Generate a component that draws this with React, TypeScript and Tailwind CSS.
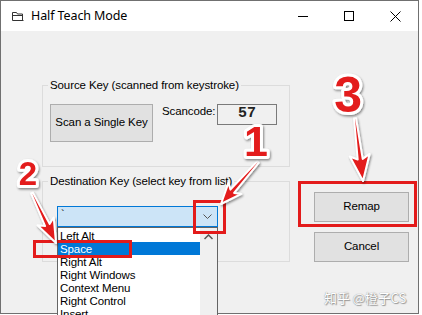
import React from 'react';

const RED = '#e31b1b';

function arrowPoints(x1: number, y1: number, x2: number, y2: number, headLen: number, headW: number, w0: number, w1: number, notch: number) {
  const len = Math.hypot(x2 - x1, y2 - y1);
  const dx = (x2 - x1) / len;
  const dy = (y2 - y1) / len;
  const nx = -dy;
  const ny = dx;
  const bx = x2 - dx * headLen;
  const by = y2 - dy * headLen;
  const wx = bx - dx * notch;
  const wy = by - dy * notch;
  const pts = [
    [x1 + (nx * w0) / 2, y1 + (ny * w0) / 2],
    [bx + (nx * w1) / 2, by + (ny * w1) / 2],
    [wx + (nx * headW) / 2, wy + (ny * headW) / 2],
    [x2, y2],
    [wx - (nx * headW) / 2, wy - (ny * headW) / 2],
    [bx - (nx * w1) / 2, by - (ny * w1) / 2],
    [x1 - (nx * w0) / 2, y1 - (ny * w0) / 2],
  ];
  return pts.map((p) => p.map((v) => v.toFixed(1)).join(',')).join(' ');
}

function Annotations() {
  return (
    <svg className="absolute inset-0 z-20 pointer-events-none" width="422" height="315" viewBox="0 0 422 315">
      <defs>
        <filter id="sh" x="-20%" y="-20%" width="140%" height="140%">
          <feDropShadow dx="1" dy="1.5" stdDeviation="1.2" floodColor="#000" floodOpacity="0.45" />
        </filter>
      </defs>
      {/* boxes */}
      <rect x="194.5" y="201.5" width="30" height="31" fill="none" stroke={RED} strokeWidth="3" />
      <rect x="34.5" y="241.5" width="96" height="15" fill="none" stroke={RED} strokeWidth="3" />
      <rect x="299.5" y="182.5" width="116" height="43" fill="none" stroke={RED} strokeWidth="3" />
      {/* arrows */}
      <g filter="url(#sh)" fill={RED} stroke="#fff" strokeWidth="2" strokeLinejoin="round">
        <polygon points={arrowPoints(258, 162, 221, 204, 17, 17, 2, 5, 4)} />
        <polygon points={arrowPoints(32, 193, 56, 243, 20, 18, 2, 5, 4)} />
        <polygon points={arrowPoints(355, 118, 363, 181, 22, 20, 2, 5, 4)} />
      </g>
      {/* numbers */}
      <g
        filter="url(#sh)"
        fill={RED}
        stroke="#fff"
        strokeWidth="6"
        strokeLinejoin="round"
        style={{ paintOrder: 'stroke', fontFamily: '"Liberation Sans", Arial, sans-serif', fontWeight: 900 }}
      >
        <text x="256" y="156" fontSize="43" textAnchor="middle">1</text>
        <text x="28" y="185" fontSize="33" textAnchor="middle">2</text>
        <text x="348" y="112" fontSize="50" textAnchor="middle">3</text>
      </g>
    </svg>
  );
}

function TitleBar() {
  return (
    <div className="h-[30px] bg-white flex items-center shrink-0">
      <svg className="ml-[10px]" width="13" height="12" viewBox="0 0 13 12" fill="none" stroke="#333" strokeWidth="1">
        <path d="M1.5 2.5h4l1 1.5h5v6.5h-10z" />
        <path d="M1.5 5.5h10" />
        <path d="M11 10.5h1.5" />
      </svg>
      <span className="ml-[7px] text-[12.5px] text-black font-['Noto_Sans',sans-serif]">Half Teach Mode</span>
      <div className="ml-auto flex items-center h-full">
        <div className="w-[46px] h-full flex items-center justify-center">
          <div className="w-[10px] h-px bg-black" />
        </div>
        <div className="w-[46px] h-full flex items-center justify-center">
          <div className="w-[10px] h-[10px] border border-black" />
        </div>
        <div className="w-[46px] h-full flex items-center justify-center">
          <svg width="11" height="11" viewBox="0 0 11 11" stroke="#000" strokeWidth="1">
            <path d="M0.5 0.5L10.5 10.5M10.5 0.5L0.5 10.5" />
          </svg>
        </div>
      </div>
    </div>
  );
}

const items = ['Left Alt', 'Space', 'Right Alt', 'Right Windows', 'Context Menu', 'Right Control', 'Insert', 'Home'];

export default function App() {
  return (
    <div className="w-[422px] h-[315px] bg-white relative overflow-hidden font-['Liberation_Sans',Arial,sans-serif] text-[11px] tracking-[-0.1px] text-black">
      <div className="w-[419px] h-[314px] border border-[#707070] flex flex-col">
        <TitleBar />
        <div className="flex-1 bg-[#f0f0f0] flex">
          <div className="ml-[41px] mt-[47px] w-[248px] flex flex-col gap-[7px]">
            <fieldset className="border border-[#dcdcdc] pb-[24px]">
              <legend className="ml-[5px] px-[2px] leading-[14px] text-[11.5px]">Source Key (scanned from keystroke)</legend>
              <div className="flex items-start mt-[12px] ml-[7px]">
                <button className="w-[103px] h-[38px] bg-[#e1e1e1] border border-[#adadad] text-[11.5px]">Scan a Single Key</button>
                <span className="ml-[9px] mt-[-1px] w-[55px] text-[11.5px]">Scancode:</span>
                <div className="w-[60px] h-[21px] border border-[#7a7a7a] flex items-center justify-center font-['Liberation_Mono',monospace] font-bold text-[15px] text-[#222] tracking-normal">
                  57
                </div>
              </div>
            </fieldset>
            <fieldset className="border border-[#dcdcdc] pb-[34px]">
              <legend className="ml-[5px] px-[2px] leading-[14px] text-[11.5px]">Destination Key (select key from list)</legend>
              <div className="relative mt-[18px] ml-[14px] w-[161px] h-[21px] bg-[#cce4f7] border border-[#0078d7] flex items-center">
                <span className="ml-[3px] mt-[-4px]">`</span>
                <svg className="ml-auto mr-[5px]" width="9" height="6" viewBox="0 0 9 6" fill="none" stroke="#555" strokeWidth="1">
                  <path d="M0.5 0.5L4.5 4.5L8.5 0.5" />
                </svg>
                <div className="absolute top-[20px] left-[-1px] w-[161px] h-[100px] bg-white border border-[#646464] flex z-10">
                  <div className="flex-1 flex flex-col pt-[1px] text-[11.5px]">
                    {items.map((it) => (
                      <div
                        key={it}
                        className={
                          it === 'Space'
                            ? 'h-[13px] leading-[14px] pl-[2px] bg-[#0078d7] text-white'
                            : 'h-[13px] leading-[14px] pl-[2px]'
                        }
                      >
                        {it}
                      </div>
                    ))}
                  </div>
                  <div className="w-[17px] bg-[#f0f0f0] flex justify-center pt-[6px]">
                    <svg width="9" height="6" viewBox="0 0 9 6" fill="none" stroke="#555" strokeWidth="1.5">
                      <path d="M0.5 5L4.5 1L8.5 5" />
                    </svg>
                  </div>
                </div>
              </div>
            </fieldset>
          </div>
          <div className="ml-[24px] mt-[161px] flex flex-col gap-[10px]">
            <button className="w-[95px] h-[30px] bg-[#e1e1e1] border border-[#adadad] text-[11.5px]">Remap</button>
            <button className="w-[95px] h-[30px] bg-[#e1e1e1] border border-[#adadad] text-[11.5px]">Cancel</button>
          </div>
        </div>
      </div>
      <div className="absolute left-[324px] top-[288px] text-[13px] text-white font-['Noto_Sans_CJK_SC',sans-serif] [text-shadow:0_0_1px_#777,1px_1px_1px_#999] z-30">
        知乎 @橙子CS
      </div>
      <Annotations />
    </div>
  );
}
